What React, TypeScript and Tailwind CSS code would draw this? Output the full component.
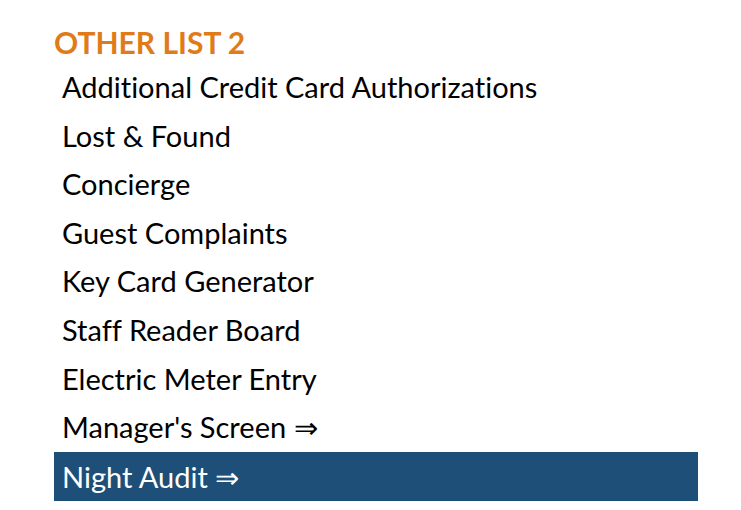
export default function App() {
  const items = [
    "Additional Credit Card Authorizations",
    "Lost & Found",
    "Concierge",
    "Guest Complaints",
    "Key Card Generator",
    "Staff Reader Board",
    "Electric Meter Entry",
    "Manager's Screen ⇒",
  ];

  return (
    <main className="min-h-screen bg-white pl-[54px] pt-[24px] font-['Lato',sans-serif] [font-variant-ligatures:none]">
      <div className="w-[644px]">
        <h2 className="text-[30px] font-bold leading-[36px] text-[#e07b1a]">OTHER LIST 2</h2>
        <ul className="mt-[3px]">
          {items.map((item) => (
            <li key={item} className="h-[48.6px] px-[8px] text-[29px] leading-[48.6px] text-black">
              {item}
            </li>
          ))}
          <li className="h-[49px] bg-[#1d4f78] px-[8px] text-[29px] leading-[49px] text-white">
            Night Audit ⇒
          </li>
        </ul>
      </div>
    </main>
  );
}
